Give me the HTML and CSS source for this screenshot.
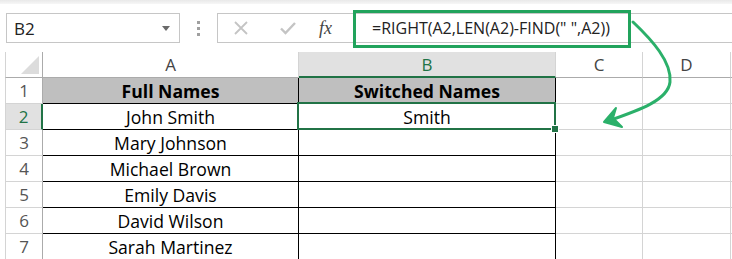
FILE: index.html
```html
<!DOCTYPE html>
<html lang="en">
<head>
    <meta charset="utf-8">
    <title>Switch names</title>
    <link rel="stylesheet" href="styles.css">
</head>
<body>
    <div class="app">
        <div class="top-band"></div>

        <!-- barra de formulas -->
        <div class="toolbar">
            <div class="name-box">
                <span class="name-ref">B2</span>
                <span class="name-caret"></span>
            </div>
            <div class="grip">
                <span></span><span></span><span></span>
            </div>
            <div class="fx-buttons">
                <svg class="fx-icon" width="16" height="16" viewBox="0 0 16 16">
                    <path d="M2 2 L14 14 M14 2 L2 14" stroke="#c4c4c4" stroke-width="1.8" fill="none"/>
                </svg>
                <svg class="fx-icon" width="18" height="16" viewBox="0 0 18 16">
                    <path d="M2 8.5 L6.5 13 L16 3" stroke="#c4c4c4" stroke-width="2.4" fill="none"/>
                </svg>
                <span class="fx-label">fx</span>
            </div>
            <div class="formula-bar">
                <span class="formula-text">=RIGHT(A2,LEN(A2)-FIND(" ",A2))</span>
                <div class="formula-mark"></div>
            </div>
        </div>

        <!-- hoja -->
        <div class="sheet">
            <div class="hd corner"><span class="corner-tri"></span></div>
            <div class="hd col">A</div>
            <div class="hd col col-sel">B</div>
            <div class="hd col">C</div>
            <div class="hd col">D</div>
            <div class="hd col col-end"></div>

            <div class="hd row">1</div>
            <div class="cell tb title">Full Names</div>
            <div class="cell tb title">Switched Names</div>
            <div class="cell"></div>
            <div class="cell"></div>
            <div class="cell end"></div>

            <div class="hd row row-sel">2</div>
            <div class="cell tb">John Smith</div>
            <div class="cell tb active">Smith</div>
            <div class="cell"></div>
            <div class="cell"></div>
            <div class="cell end"></div>

            <div class="hd row">3</div>
            <div class="cell tb">Mary Johnson</div>
            <div class="cell tb"></div>
            <div class="cell"></div>
            <div class="cell"></div>
            <div class="cell end"></div>

            <div class="hd row">4</div>
            <div class="cell tb">Michael Brown</div>
            <div class="cell tb"></div>
            <div class="cell"></div>
            <div class="cell"></div>
            <div class="cell end"></div>

            <div class="hd row">5</div>
            <div class="cell tb">Emily Davis</div>
            <div class="cell tb"></div>
            <div class="cell"></div>
            <div class="cell"></div>
            <div class="cell end"></div>

            <div class="hd row">6</div>
            <div class="cell tb">David Wilson</div>
            <div class="cell tb"></div>
            <div class="cell"></div>
            <div class="cell"></div>
            <div class="cell end"></div>

            <div class="hd row">7</div>
            <div class="cell tb">Sarah Martinez</div>
            <div class="cell tb"></div>
            <div class="cell"></div>
            <div class="cell"></div>
            <div class="cell end"></div>
        </div>

        <!-- flecha de la anotacion -->
        <svg class="arrow" width="732" height="259" viewBox="0 0 732 259">
            <path d="M633 22 C 652 40, 672 62, 670 82 C 668 100, 640 110, 608 121" stroke="#2bb06a" stroke-width="3" fill="none" stroke-linecap="round"/>
            <path d="M604 122 L616 108 L613 118 L622 127 Z" fill="#2bb06a" stroke="#2bb06a" stroke-width="2" stroke-linejoin="round"/>
        </svg>
    </div>
</body>
</html>
```

FILE: styles.css
```css
* {
    box-sizing: border-box;
}

body {
    margin: 0;
    background: #fff;
    font-family: "Open Sans", "Noto Sans", sans-serif;
    color: #000;
}

.app {
    position: relative;
    width: 732px;
    height: 259px;
    overflow: hidden;
}

.top-band {
    height: 4px;
    background: linear-gradient(#e9e9e9, #f7f7f7);
}

/* Barra de formulas */
.toolbar {
    display: flex;
    align-items: center;
    height: 48px;
    padding-left: 6px;
}

.name-box {
    display: flex;
    align-items: center;
    justify-content: space-between;
    width: 174px;
    height: 30px;
    padding: 0 9px 0 7px;
    border: 1px solid #c6c6c6;
}

.name-ref {
    font-size: 17px;
    color: #222;
}

.name-caret {
    width: 0;
    height: 0;
    border-left: 4px solid transparent;
    border-right: 4px solid transparent;
    border-top: 5px solid #6a6a6a;
}

.grip {
    display: flex;
    flex-direction: column;
    gap: 3px;
    width: 37px;
    align-items: center;
}

.grip span {
    width: 3px;
    height: 3px;
    background: #a0a0a0;
}

.fx-buttons {
    display: flex;
    align-items: center;
    width: 136px;
    height: 30px;
    border: 1px solid #c6c6c6;
    border-right: none;
    padding-left: 15px;
    gap: 30px;
}

.fx-label {
    font-family: "Liberation Serif", "DejaVu Serif", serif;
    font-style: italic;
    font-size: 18px;
    color: #444;
    margin-left: -8px;
}

.formula-bar {
    position: relative;
    flex: 1;
    display: flex;
    align-items: center;
    height: 30px;
    border-top: 1px solid #c6c6c6;
    border-bottom: 1px solid #c6c6c6;
    padding-left: 19px;
}

.formula-text {
    font-size: 16px;
    color: #222;
}

.formula-mark {
    position: absolute;
    left: 0;
    top: -4px;
    width: 278px;
    height: 38px;
    border: 3px solid #21a35c;
}

/* Hoja */
.sheet {
    display: grid;
    grid-template-columns: 38px 256px 257px 87px 88px 6px;
    grid-auto-rows: 26px;
    margin-left: 5px;
}

.hd {
    display: flex;
    align-items: center;
    justify-content: center;
    background: #fff;
    color: #444;
    font-size: 17px;
    border-right: 1px solid #d4d4d4;
    border-bottom: 1px solid #d4d4d4;
}

.corner {
    position: relative;
    border-left: 1px solid #d4d4d4;
    border-bottom-color: #ababab;
    border-right-color: #ababab;
}

.corner-tri {
    position: absolute;
    right: 3px;
    bottom: 3px;
    width: 0;
    height: 0;
    border-left: 18px solid transparent;
    border-bottom: 18px solid #dcdcdc;
}

.col {
    border-bottom-color: #ababab;
    padding-bottom: 1px;
}

.col-sel {
    background: #e1e1e1;
    color: #217346;
    border-bottom: 2px solid #217346;
    padding-top: 1px;
}

.col-end {
    border-right: none;
}

.row {
    border-left: 1px solid #d4d4d4;
    border-right-color: #ababab;
    color: #555;
}

.row-sel {
    background: #e1e1e1;
    color: #217346;
    border-right: 2px solid #217346;
}

.cell {
    display: flex;
    align-items: center;
    justify-content: center;
    font-size: 17.6px;
    border-right: 1px solid #d4d4d4;
    border-bottom: 1px solid #d4d4d4;
    white-space: nowrap;
}

.cell.tb {
    border-right-color: #000;
    border-bottom-color: #000;
}

.cell.title {
    background: #bfbfbf;
    font-weight: 700;
}

.cell.end {
    border-right: none;
}

.cell.active {
    position: relative;
}

.cell.active::after {
    content: "";
    position: absolute;
    left: -2px;
    top: -2px;
    right: -1px;
    bottom: -1px;
    border: 2px solid #217346;
}

.cell.active::before {
    content: "";
    position: absolute;
    right: -4px;
    bottom: -4px;
    width: 6px;
    height: 6px;
    background: #217346;
    border: 1px solid #fff;
    z-index: 2;
}

.arrow {
    position: absolute;
    left: 0;
    top: 0;
    pointer-events: none;
}
```
